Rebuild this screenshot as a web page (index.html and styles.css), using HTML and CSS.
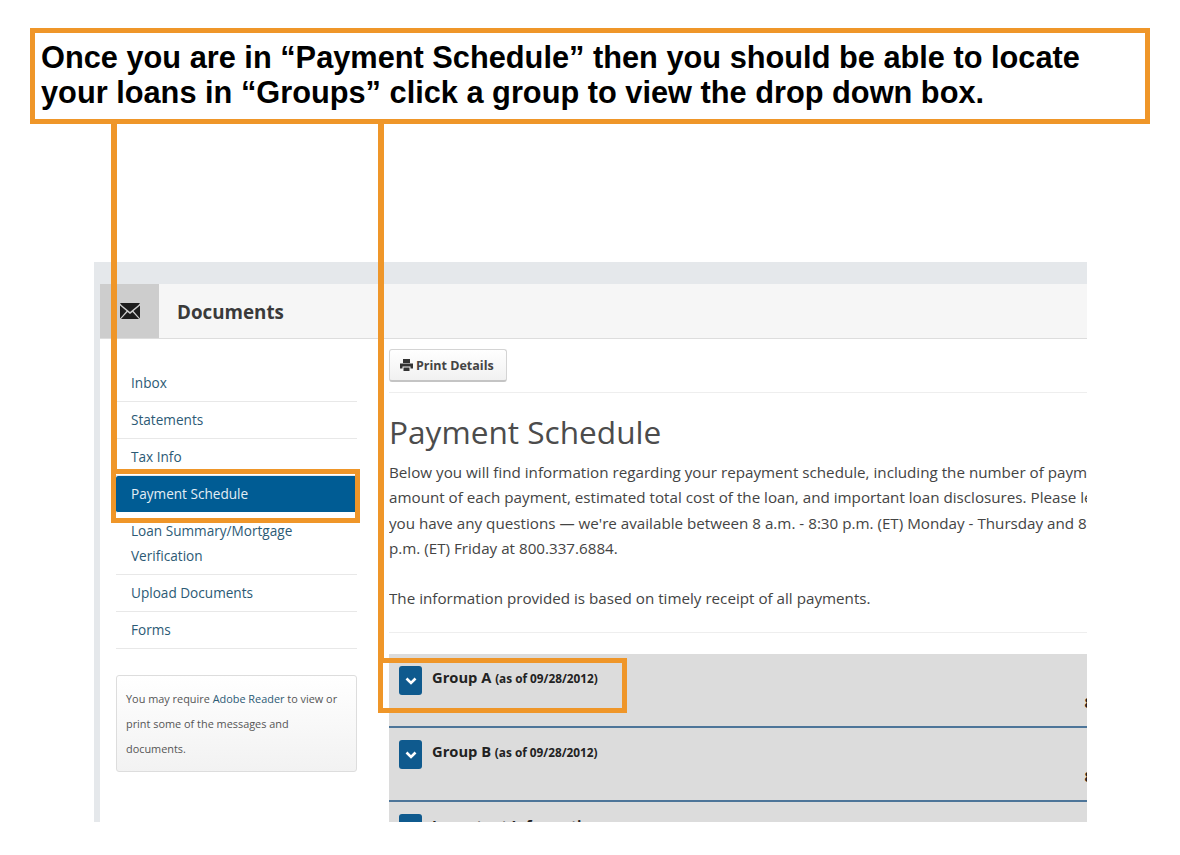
FILE: index.html
```html
<!DOCTYPE html>
<html lang="en">

<head>
    <meta charset="UTF-8">
    <title>Payment Schedule</title>
    <link rel="stylesheet" href="styles.css">
</head>

<body>
    <div class="page">
        <div class="callout">
            Once you are in “Payment Schedule” then you should be able to locate<br>
            your loans in “Groups” click a group to view the drop down box.
        </div>

        <div class="shot">
            <div class="panel">
                <div class="panel-head">
                    <div class="panel-icon">
                        <svg width="20" height="16" viewBox="0 0 20 16">
                            <path d="M0 0H20L18.5 2 10 9 1.5 2ZM0 2.5 6.5 8 0 15.5ZM20 2.5 13.5 8 20 15.5ZM1 16 7.5 9 10 11 12.5 9 19 16Z" fill="#1c1c1c" />
                        </svg>
                    </div>
                    <h2>Documents</h2>
                </div>

                <div class="panel-body">
                    <div class="side">
                        <ul class="nav">
                            <li><a href="#">Inbox</a></li>
                            <li><a href="#">Statements</a></li>
                            <li><a href="#">Tax Info</a></li>
                            <li class="active"><a href="#">Payment Schedule</a></li>
                            <li><a href="#">Loan Summary/Mortgage Verification</a></li>
                            <li><a href="#">Upload Documents</a></li>
                            <li><a href="#">Forms</a></li>
                        </ul>
                        <div class="notice">
                            You may require <a href="#">Adobe Reader</a> to view or print some of the messages and documents.
                        </div>
                    </div>

                    <div class="main">
                        <div class="toolbar">
                            <button class="print-btn">
                                <svg width="13" height="12" viewBox="0 0 13 12">
                                    <path d="M3 0H10V4H3ZM0 4.5H13V9.5H10.5V7.5H2.5V9.5H0ZM3.5 8.5H9.5V12H3.5Z" fill="#333" />
                                </svg>
                                Print Details
                            </button>
                        </div>

                        <h1>Payment Schedule</h1>
                        <p class="intro">
                            <span>Below you will find information regarding your repayment schedule, including the number of payments,</span>
                            <span>amount of each payment, estimated total cost of the loan, and important loan disclosures. Please let us know if</span>
                            <span>you have any questions — we're available between 8 a.m. - 8:30 p.m. (ET) Monday - Thursday and 8 a.m. - 5</span>
                            <span>p.m. (ET) Friday at 800.337.6884.</span>
                        </p>
                        <p class="intro last">The information provided is based on timely receipt of all payments.</p>

                        <div class="group">
                            <div class="toggle"><svg width="12" height="8" viewBox="0 0 12 8"><path d="M1.5 1.5 6 6 10.5 1.5" fill="none" stroke="#fff" stroke-width="2.6" /></svg></div>
                            <div class="group-title">Group A <small>(as of 09/28/2012)</small></div>
                            <div class="group-amount">8</div>
                        </div>
                        <div class="group">
                            <div class="toggle"><svg width="12" height="8" viewBox="0 0 12 8"><path d="M1.5 1.5 6 6 10.5 1.5" fill="none" stroke="#fff" stroke-width="2.6" /></svg></div>
                            <div class="group-title">Group B <small>(as of 09/28/2012)</small></div>
                            <div class="group-amount">8</div>
                        </div>
                        <div class="group">
                            <div class="toggle"><svg width="12" height="8" viewBox="0 0 12 8"><path d="M1.5 1.5 6 6 10.5 1.5" fill="none" stroke="#fff" stroke-width="2.6" /></svg></div>
                            <div class="group-title">Important Information</div>
                        </div>
                    </div>
                </div>
            </div>
        </div>

        <!-- orange markup drawn on top of the screenshot -->
        <div class="mark line-left"></div>
        <div class="mark line-right"></div>
        <div class="mark box-payment"></div>
        <div class="mark box-group"></div>
    </div>
</body>

</html>
```

FILE: styles.css
```css
* {
    box-sizing: border-box;
}

html,
body {
    margin: 0;
    background: #fff;
    overflow: hidden;
}

.page {
    position: relative;
    width: 1180px;
    height: 855px;
    overflow: hidden;
    font-family: "Open Sans", sans-serif;
    color: #444;
}

.callout {
    margin: 28px 0 0 30px;
    width: 1120px;
    height: 96px;
    padding: 7px 0 0 6px;
    border: 5px solid #ef9629;
    font-family: "Liberation Sans", Arial, sans-serif;
    font-size: 30.75px;
    font-weight: bold;
    line-height: 35px;
    color: #000;
    white-space: nowrap;
}

.shot {
    margin: 138px 0 0 94px;
    width: 993px;
    height: 560px;
    padding: 22px 0 0 6px;
    background: #e5e8eb;
    overflow: hidden;
}

.panel {
    background: #fff;
    height: 100%;
}

.panel-head {
    display: flex;
    align-items: center;
    height: 55px;
    background: #f6f6f6;
    border-bottom: 1px solid #ddd;
}

.panel-icon {
    display: flex;
    align-items: center;
    justify-content: center;
    width: 59px;
    height: 54px;
    background: #cdcdcd;
}

.panel-head h2 {
    margin: 2px 0 0 18px;
    font-size: 18.8px;
    font-weight: 700;
    color: #3a3a3a;
}

.panel-body {
    display: flex;
}

.side {
    width: 289px;
    padding: 26px 32px 0 16px;
    flex-shrink: 0;
}

.nav {
    margin: 0;
    padding: 0;
    list-style: none;
}

.nav li {
    padding: 5px 15px 6px;
    border-bottom: 1px solid #e8e8e8;
    font-size: 13.6px;
    line-height: 25px;
}

.nav a {
    color: #2c5a75;
    text-decoration: none;
}

.nav .active {
    background: #005c94;
    border-bottom: 1px solid #fff;
    border-radius: 2px;
}

.nav .active a {
    color: #e4eef5;
}

.notice {
    margin-top: 26px;
    height: 97px;
    padding: 10px 9px;
    border: 1px solid #ddd;
    border-radius: 3px;
    background: linear-gradient(#fff, #f2f2f2);
    font-size: 10.9px;
    line-height: 25px;
    color: #555;
}

.notice a {
    color: #2c5a75;
    text-decoration: none;
}

.main {
    flex: 1;
    min-width: 0;
    overflow: hidden;
}

.toolbar {
    height: 54px;
    padding-top: 10px;
    border-bottom: 1px solid #eee;
}

.print-btn {
    display: flex;
    align-items: center;
    gap: 3px;
    width: 118px;
    height: 33px;
    padding: 0 0 0 10px;
    border: 1px solid #d4d4d4;
    border-bottom: 2px solid #c4c4c4;
    border-radius: 3px;
    background: linear-gradient(#fff, #f1f1f1);
    font-family: "Open Sans", sans-serif;
    font-size: 12.5px;
    font-weight: 700;
    color: #444;
}

h1 {
    margin: 17px 0 0;
    font-size: 31.6px;
    font-weight: 400;
    line-height: 44px;
    color: #4c4c4c;
}

.intro {
    margin: 6px 0 0;
    font-size: 15.2px;
    line-height: 25.3px;
    white-space: nowrap;
    color: #444;
}

.intro span {
    display: block;
}

.intro.last {
    margin-top: 25px;
    padding-bottom: 21px;
    border-bottom: 1px solid #eee;
    margin-bottom: 21px;
}

.group {
    position: relative;
    display: flex;
    gap: 10px;
    height: 74px;
    padding: 12px 0 0 10px;
    background: #dcdcdc;
    border-bottom: 2px solid #4d7599;
}

.toggle {
    display: flex;
    align-items: center;
    justify-content: center;
    width: 23px;
    height: 29px;
    background: #0f5a8e;
    border-radius: 3px;
}

.group-title {
    font-size: 14.7px;
    font-weight: 700;
    line-height: 22px;
    color: #222;
}

.group-title small {
    font-size: 11.8px;
}

.group-amount {
    position: absolute;
    right: -6px;
    top: 38px;
    font-size: 15px;
    font-weight: 700;
    color: #222;
}

.mark {
    position: absolute;
    border: 5px solid #ef9629;
}

.line-left {
    left: 111px;
    top: 123px;
    width: 6px;
    height: 348px;
    border-width: 0 0 0 6px;
}

.line-right {
    left: 378px;
    top: 123px;
    width: 6px;
    height: 537px;
    border-width: 0 0 0 6px;
}

.box-payment {
    left: 111px;
    top: 469px;
    width: 249px;
    height: 54px;
}

.box-group {
    left: 378px;
    top: 658px;
    width: 249px;
    height: 55px;
}
```
